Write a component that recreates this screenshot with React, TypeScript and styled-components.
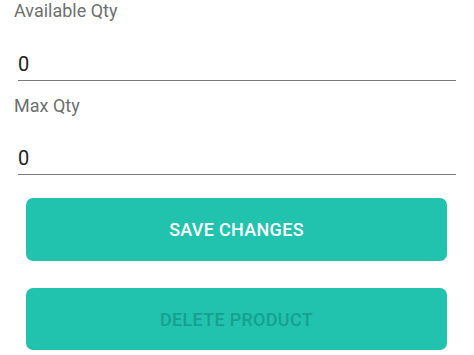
import styled, { createGlobalStyle } from 'styled-components';

// ============================================================================
// Styled Components
// ============================================================================

const GlobalStyle = createGlobalStyle`
  html, body {
    margin: 0;
    padding: 0;
    background: #ffffff;
  }

  body {
    font-family: Roboto, "Noto Sans", "Liberation Sans", sans-serif;
  }
`;

const Form = styled.div`
  width: 474px;
  height: 355px;
  overflow: hidden;
  display: flex;
  flex-direction: column;
`;

const Field = styled.div<{ $first?: boolean }>`
  display: flex;
  flex-direction: column;
  padding: ${(p) => (p.$first ? '0' : '14px')} 18px 0 14px;
`;

const Label = styled.label`
  font-size: 18px;
  line-height: 21px;
  color: #6f6f6f;
`;

const Input = styled.input<{ $gap: number }>`
  margin: ${(p) => p.$gap}px 0 0 4px;
  width: 438px;
  box-sizing: border-box;
  padding: 0 0 4px 0;
  height: 29px;
  font-family: inherit;
  font-size: 20px;
  line-height: 24px;
  color: #222222;
  background: transparent;
  border: none;
  border-bottom: 1.5px solid #7a7a7a;
  outline: none;
`;

const Actions = styled.div`
  display: flex;
  flex-direction: column;
  gap: 27px;
  padding: 23px 27px 0 26px;
`;

const Button = styled.button<{ $muted?: boolean }>`
  display: flex;
  align-items: center;
  justify-content: center;
  height: ${(p) => (p.$muted ? '62px' : '63px')};
  width: 100%;
  padding: 0;
  border: none;
  border-radius: 7px;
  background: #22c3ae;
  color: ${(p) => (p.$muted ? '#16a08e' : '#ffffff')};
  font-family: inherit;
  font-size: 18px;
  font-weight: 500;
  letter-spacing: 0.3px;
  cursor: pointer;
`;

// ============================================================================
// Component
// ============================================================================

export default function App() {
  return (
    <>
      <GlobalStyle />
      <Form>
        <Field $first>
          <Label htmlFor="available">Available Qty</Label>
          <Input id="available" $gap={31} type="text" defaultValue="0" />
        </Field>
        <Field>
          <Label htmlFor="max">Max Qty</Label>
          <Input id="max" $gap={30} type="text" defaultValue="0" />
        </Field>
        <Actions>
          <Button type="button">SAVE CHANGES</Button>
          <Button type="button" $muted>
            DELETE PRODUCT
          </Button>
        </Actions>
      </Form>
    </>
  );
}
